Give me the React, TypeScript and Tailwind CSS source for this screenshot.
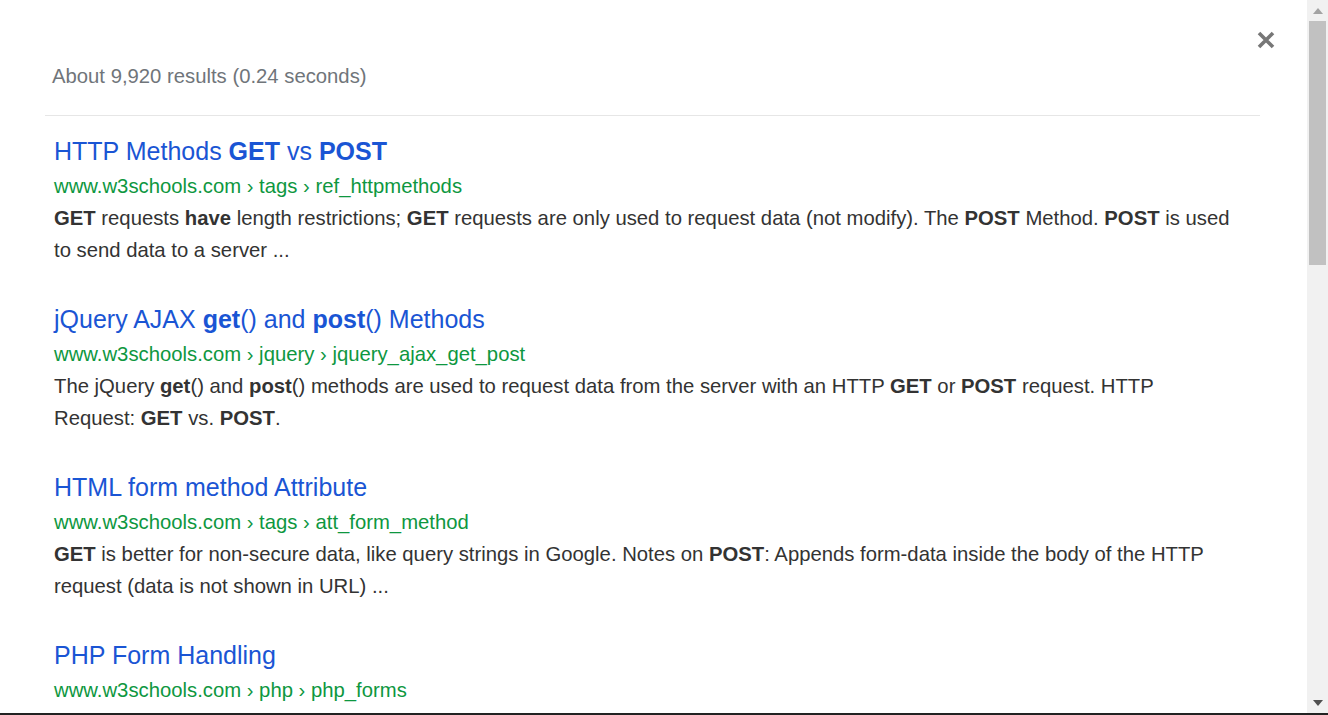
import React from "react";

type Part = string | { b: string };

const results: { title: Part[]; url: string; snippet: Part[] }[] = [
  {
    title: ["HTTP Methods ", { b: "GET" }, " vs ", { b: "POST" }],
    url: "www.w3schools.com › tags › ref_httpmethods",
    snippet: [
      { b: "GET" },
      " requests ",
      { b: "have" },
      " length restrictions; ",
      { b: "GET" },
      " requests are only used to request data (not modify). The ",
      { b: "POST" },
      " Method. ",
      { b: "POST" },
      " is used to send data to a server ...",
    ],
  },
  {
    title: ["jQuery AJAX ", { b: "get" }, "() and ", { b: "post" }, "() Methods"],
    url: "www.w3schools.com › jquery › jquery_ajax_get_post",
    snippet: [
      "The jQuery ",
      { b: "get" },
      "() and ",
      { b: "post" },
      "() methods are used to request data from the server with an HTTP ",
      { b: "GET" },
      " or ",
      { b: "POST" },
      " request. HTTP Request: ",
      { b: "GET" },
      " vs. ",
      { b: "POST" },
      ".",
    ],
  },
  {
    title: ["HTML form method Attribute"],
    url: "www.w3schools.com › tags › att_form_method",
    snippet: [
      { b: "GET" },
      " is better for non-secure data, like query strings in Google. Notes on ",
      { b: "POST" },
      ": Appends form-data inside the body of the HTTP request (data is not shown in URL) ...",
    ],
  },
  {
    title: ["PHP Form Handling"],
    url: "www.w3schools.com › php › php_forms",
    snippet: [
      "The example below displays a simple HTML form with two input fields and a submit button. When the user fills out the form and clicks the submit button ...",
    ],
  },
];

function render(parts: Part[]) {
  return parts.map((p, i) =>
    typeof p === "string" ? (
      <React.Fragment key={i}>{p}</React.Fragment>
    ) : (
      <b key={i} className="font-bold">
        {p.b}
      </b>
    )
  );
}

export default function App() {
  return (
    <div
      className="flex h-[715px] w-full flex-col overflow-hidden bg-white"
      style={{ fontFamily: '"Liberation Sans", Arial, sans-serif' }}
    >
      <div className="flex min-h-0 flex-1">
        <div className="relative min-w-0 flex-1 overflow-hidden">
          <button className="absolute left-[1255px] top-[29px] flex h-[22px] w-[22px] items-center justify-center">
            <svg width="20" height="20" viewBox="0 0 20 20">
              <path d="M3 3 L17 17 M17 3 L3 17" stroke="#777" strokeWidth="3.6" strokeLinecap="butt" />
            </svg>
          </button>
          <div className="ml-[45px] w-[1215px] pt-[60px]">
            <div className="pl-[7px] text-[20.3px] leading-[32px] text-[#70757a]">
              About 9,920 results (0.24 seconds)
            </div>
            <div className="mt-[23px] h-px bg-[#e6e6e6]" />
            <div className="pt-[17px]">
              {results.map((r, i) => (
                <div key={i} className="mb-[35px] pl-[9px] pr-[24px]">
                  <div className="text-[25px] leading-[36px] text-[#1a55d4]">{render(r.title)}</div>
                  <div className="pt-[1px] text-[20.3px] leading-[33px] text-[#0e973f]">{r.url}</div>
                  <div className="-mt-[1px] text-[20.3px] leading-[32px] text-[#333]">{render(r.snippet)}</div>
                </div>
              ))}
            </div>
          </div>
        </div>
        <div className="flex w-[21px] flex-col bg-[#f1f1f1]">
          <div className="flex h-[21px] items-center justify-center">
            <svg width="10" height="6" viewBox="0 0 10 6">
              <path d="M0 6 L5 0 L10 6 Z" fill="#a3a3a3" />
            </svg>
          </div>
          <div className="mx-[2px] h-[244px] bg-[#c1c1c1]" />
          <div className="flex-1" />
          <div className="flex h-[21px] items-center justify-center">
            <svg width="10" height="6" viewBox="0 0 10 6">
              <path d="M0 0 L10 0 L5 6 Z" fill="#505050" />
            </svg>
          </div>
        </div>
      </div>
      <div className="h-[2px] bg-[#222]" />
    </div>
  );
}
